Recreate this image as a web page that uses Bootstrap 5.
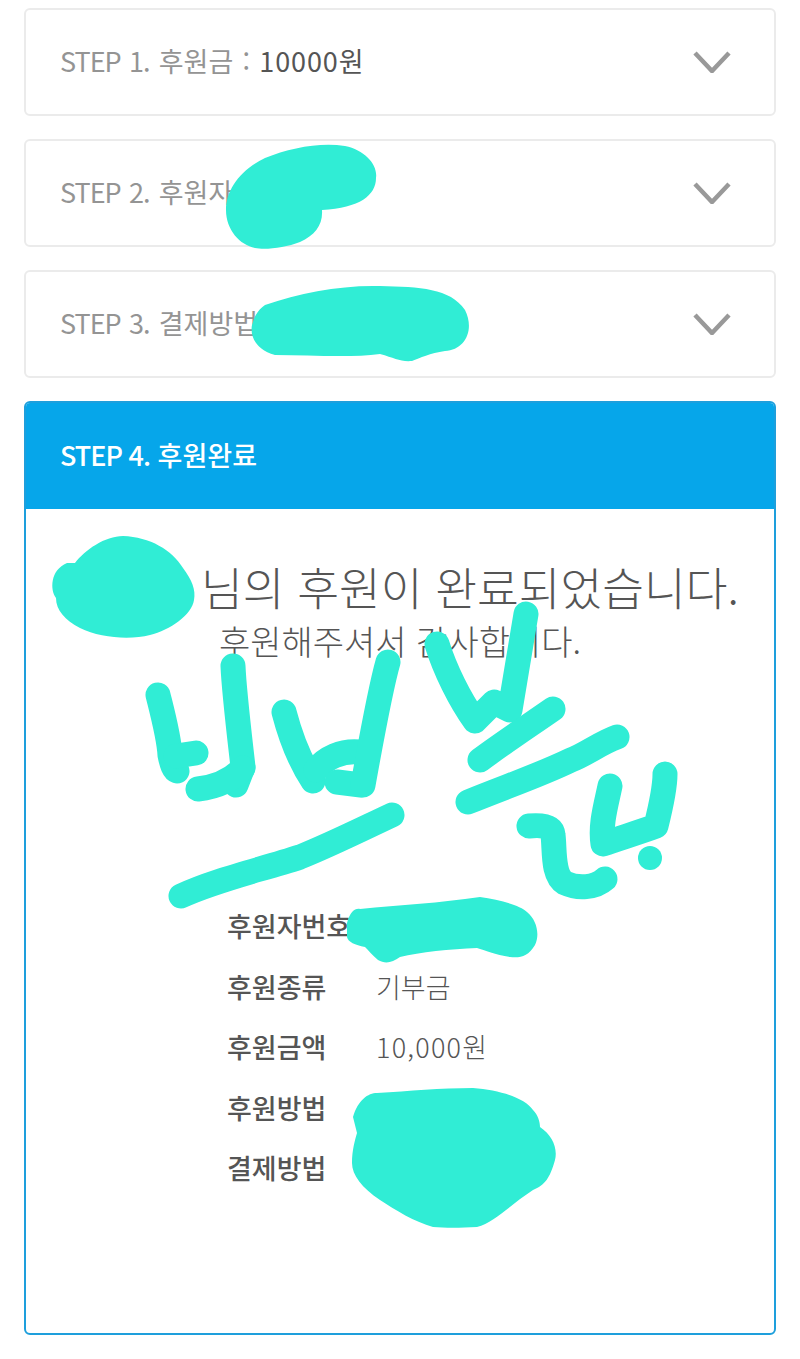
<!DOCTYPE html>
<html lang="ko">
<head>
<meta charset="utf-8">
<title>후원완료</title>
<link rel="stylesheet" href="https://cdn.jsdelivr.net/npm/bootstrap@5.3.0/dist/css/bootstrap.min.css">
<style>
html,body{height:1359px;overflow:hidden}
body{font-family:"Noto Sans CJK KR","Noto Sans",sans-serif;background:#fff;color:#555}
.page-wrap{position:relative;height:1359px;padding:8px 24px 0}
.step-card{height:108px;border:2px solid #ebebeb;border-radius:6px;margin-bottom:23px;padding:0 43px 0 34px}
.step-title{font-size:27px;color:#949494;font-weight:400;line-height:1;margin-top:-4px;word-spacing:1.7px}
.step-title b{color:#555;font-weight:400;letter-spacing:.9px}
.step-no{letter-spacing:-1px}
.step-chev{width:38px;height:22px;display:block}
.done-card{height:934px;border:2px solid #1e9fdc;border-radius:6px;overflow:hidden}
.done-head{height:106px;background:#06a6ea;color:#fff;font-size:27px;font-weight:500;padding:0 0 1px 34px;border:0;border-radius:0}
.done-body{padding-top:50px}
.msg-big{font-size:45.4px;font-weight:300;line-height:54px;color:#555;text-align:center;margin:0}
.name-gap{display:inline-block;width:140px}
.msg-sub{font-size:34px;font-weight:300;line-height:56px;color:#555;text-align:center;margin:0}
.info-list{margin:227px 0 0 201px;display:grid;grid-template-columns:149px auto;grid-auto-rows:60.5px;align-items:center;font-size:27px}
.info-list dt{font-weight:500;color:#555;margin:0}
.info-list dd{font-weight:300;color:#555;margin:0}
.info-list .amount{letter-spacing:1.2px}
.scribble{position:absolute;left:0;top:0;width:800px;height:1359px;pointer-events:none}
.scribble path,.scribble circle{fill:#30edd5}
.scribble .ln{fill:none;stroke:#30edd5;stroke-width:25;stroke-linecap:round;stroke-linejoin:round}
</style>
</head>
<body>
<div class="page-wrap">
  <div class="step-card bg-white d-flex align-items-center justify-content-between">
    <div class="step-title"><span class="step-no">STEP 1.</span> 후원금 : <b>10000원</b></div>
    <svg class="step-chev" viewBox="0 0 38 22"><path d="M2 2 19 20 36 2" fill="none" stroke="#999" stroke-width="4.5"/></svg>
  </div>
  <div class="step-card bg-white d-flex align-items-center justify-content-between">
    <div class="step-title"><span class="step-no">STEP 2.</span> 후원자</div>
    <svg class="step-chev" viewBox="0 0 38 22"><path d="M2 2 19 20 36 2" fill="none" stroke="#999" stroke-width="4.5"/></svg>
  </div>
  <div class="step-card bg-white d-flex align-items-center justify-content-between">
    <div class="step-title"><span class="step-no">STEP 3.</span> 결제방법</div>
    <svg class="step-chev" viewBox="0 0 38 22"><path d="M2 2 19 20 36 2" fill="none" stroke="#999" stroke-width="4.5"/></svg>
  </div>
  <div class="done-card card">
    <div class="done-head d-flex align-items-center"><span class="step-no">STEP 4.</span>&nbsp;후원완료</div>
    <div class="done-body">
      <p class="msg-big"><span class="name-gap"></span>님의 후원이 완료되었습니다.</p>
      <p class="msg-sub">후원해주셔서 감사합니다.</p>
      <dl class="info-list">
        <dt>후원자번호</dt><dd></dd>
        <dt>후원종류</dt><dd>기부금</dd>
        <dt>후원금액</dt><dd class="amount">10,000원</dd>
        <dt>후원방법</dt><dd></dd>
        <dt>결제방법</dt><dd></dd>
      </dl>
    </div>
  </div>
  <svg class="scribble" viewBox="0 0 800 1359" aria-hidden="true">
    <path d="M226 210C226 190 240 170 265 158C290 148 320 142 345 146C365 150 378 165 376 178C376 195 360 208 322 210C323 225 315 235 300 242C285 248 265 250 255 248C240 245 226 230 226 210Z"/>
    <path d="M265 305C300 293 340 285 380 286C420 287 450 288 465 310C475 330 465 350 445 351C430 353 420 358 412 361C400 362 395 358 380 354C350 358 310 355 275 355C255 350 250 335 252 325C255 315 258 310 265 305Z"/>
    <path d="M75 563C85 550 105 536 123 536C150 537 172 550 183 568C192 580 196 590 194 600C192 615 170 630 150 635C130 640 100 638 80 628C65 620 56 610 56 598C50 590 50 570 67 563Z"/>
    <path d="M347 923C350 912 355 908 360 909C400 905 440 903 480 897C500 900 520 905 527 912C537 920 540 935 535 945C528 957 520 958 510 957C495 955 485 950 477 948C450 949 420 952 400 957C392 963 385 964 378 960C372 955 368 950 365 947C355 945 348 942 347 937Z"/>
    <path d="M353 1117C358 1100 368 1093 377 1093C410 1091 440 1088 473 1088C500 1090 525 1098 533 1110C538 1115 540 1122 540 1127C552 1135 558 1148 555 1160C550 1178 545 1185 533 1190C510 1205 495 1222 477 1227C460 1228 445 1228 433 1227C415 1222 395 1210 380 1200C362 1188 352 1175 352 1163C352 1150 355 1140 357 1133Z"/>
    <g class="ln">
      <path class="ln" d="M158 695C163 715 169 737 170 755C172 765 174 770 177 771"/>
      <path class="ln" d="M176 756L196 753"/>
      <path class="ln" d="M233 666C234 690 238 723 243 767L236 785"/>
      <path class="ln" d="M198 789C215 787 232 780 243 768"/>
      <path class="ln" d="M284 712C290 735 299 760 313 781"/>
      <path class="ln" d="M316 770C325 758 342 750 360 752"/>
      <path class="ln" d="M337 782L361 785"/>
      <path class="ln" d="M388 662C380 690 372 735 363 785"/>
      <path class="ln" d="M392 815C360 830 330 845 300 857C260 870 215 880 181 896"/>
      <path class="ln" d="M437 644C445 670 460 700 475 721L494 702L510 710L526 614"/>
      <path class="ln" d="M553 709C530 725 500 745 480 760"/>
      <path class="ln" d="M617 737C600 743 585 755 571 760C540 775 510 785 468 802"/>
      <path class="ln" d="M529 826C540 825 552 825 553 835C555 850 552 875 565 883C578 889 595 888 605 879"/>
      <path class="ln" d="M610 786C606 805 600 825 603 844C620 838 640 832 656 826C660 810 665 790 665 774"/>
    </g>
    <circle cx="650" cy="858" r="12"/>
  </svg>
</div>
<script src="https://cdn.jsdelivr.net/npm/bootstrap@5.3.0/dist/js/bootstrap.bundle.min.js"></script>
</body>
</html>
